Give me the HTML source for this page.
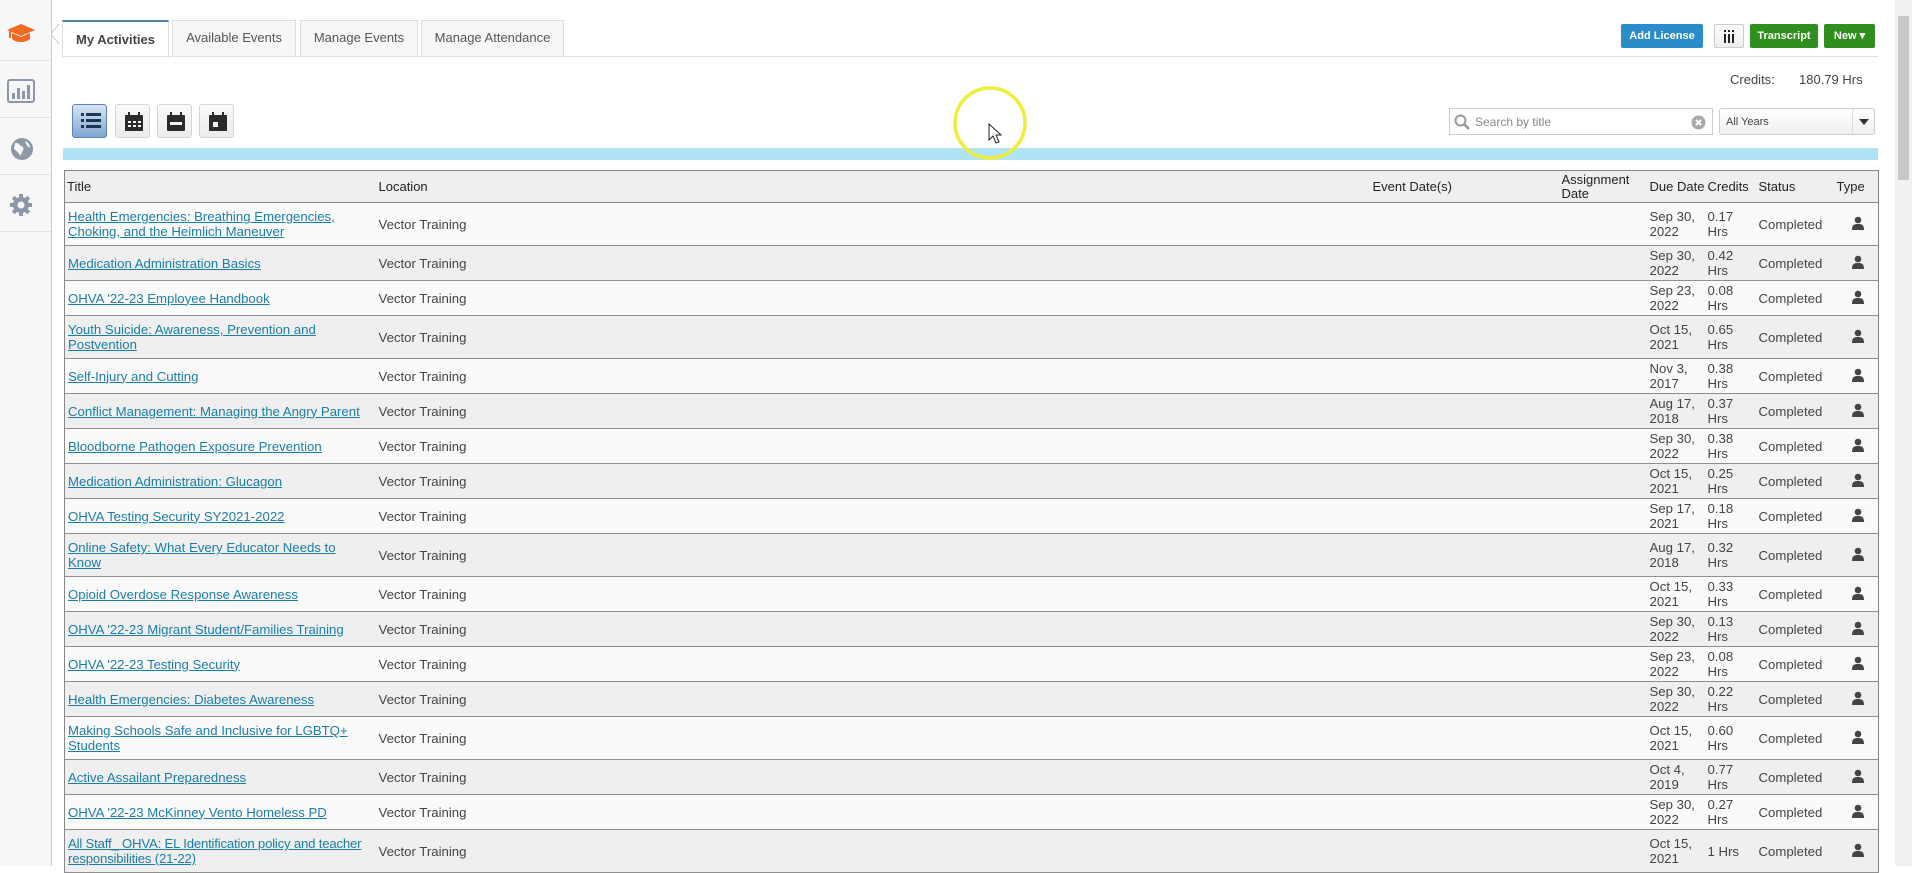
<!DOCTYPE html>
<html><head><meta charset="utf-8"><style>
*{box-sizing:border-box;margin:0;padding:0}
html,body{width:1912px;height:866px;overflow:hidden;background:#fff;font-family:"Liberation Sans",Arial,sans-serif;color:#333}
.sb{position:absolute;left:0;top:0;width:52px;height:866px;background:#f7f7f7;border-right:1px solid #c8c8c8}
.sb .d{position:absolute;left:0;width:51px;height:1px;background:#e2e2e2}
.sb svg{position:absolute}
.tab{position:absolute;top:20px;height:37px;border:1px solid #ddd;border-bottom:none;background:#f7f7f7;font-size:13px;color:#555;text-align:center;line-height:34px}
.tab.a{background:#fff;border-top:2px solid #4d87a6;font-weight:bold;color:#444;height:38px;line-height:36px}
.hl{position:absolute;left:62px;top:56px;width:1816px;height:1px;background:#e2e2e2}
.btn{position:absolute;top:24px;height:24px;border-radius:2px;font-size:11px;font-weight:bold;color:#fff;text-align:center;line-height:24px}
.vb{position:absolute;top:104px;width:35px;height:34px;border:1px solid #d6d6d6;border-radius:3px;background:linear-gradient(#fafafa,#ececec)}
.vb svg{position:absolute;left:8px;top:7px}
.bar{position:absolute;left:63px;top:148px;width:1815px;height:12px;background:#b1e3f7}
table{position:absolute;left:64px;top:170px;width:1814px;border-collapse:collapse;table-layout:fixed;font-size:13.2px;border-left:1px solid #888;border-right:1px solid #888}
th{background:#efefef;height:32px;font-weight:normal;color:#222;text-align:left;padding:0 2px;line-height:14px;border-top:1px solid #888;border-bottom:1px solid #888;font-size:13px;white-space:nowrap}
td{height:35px;padding:0 2px;line-height:15px;border-bottom:1px solid #8f8f8f;color:#444;vertical-align:middle}
td:first-child{padding-left:3px;white-space:nowrap}
tr.t td{height:43px}
tr:nth-child(odd) td{background:#efefef}
tr:nth-child(even) td{background:#fafafa}
td a{color:#1b7ea8;text-decoration:underline}
td.ic{text-align:center;padding-left:6px}
.sc{position:absolute;left:1895px;top:0;width:17px;height:866px;background:#f1f1f1}
.sc .th{position:absolute;left:3px;top:16px;width:11px;height:164px;background:#c8c8c8}
</style></head><body>
<div class="sb">
 <svg style="left:6px;top:22px" width="30" height="22" viewBox="0 0 30 22"><path d="M15 2 L29 8 L15 14 L1 8 Z" fill="#f26a21"/><path d="M6 11 V17 C10 21 20 21 24 17 V11 L15 15 Z" fill="#f26a21"/><path d="M4 9 V16" stroke="#f26a21" stroke-width="2"/></svg>
 <svg style="left:51px;top:24px" width="10" height="20"><path d="M8 0 L0 10 L8 20" fill="#fff" stroke="#c8c8c8"/><rect x="8" y="0" width="3" height="20" fill="#fff"/></svg>
 <div class="d" style="top:60px"></div>
 <svg style="left:7px;top:79px" width="28" height="24" viewBox="0 0 28 24"><rect x="1" y="1" width="26" height="22" rx="2" fill="none" stroke="#8c97a8" stroke-width="2"/><rect x="5" y="14" width="3" height="6" fill="#8c97a8"/><rect x="10" y="9" width="3" height="11" fill="#8c97a8"/><rect x="15" y="12" width="3" height="8" fill="#8c97a8"/><rect x="20" y="6" width="3" height="14" fill="#8c97a8"/></svg>
 <div class="d" style="top:117px"></div>
 <svg style="left:10px;top:137px" width="24" height="24" viewBox="0 0 24 24"><circle cx="12" cy="12" r="11" fill="#8c97a8"/><path d="M5 6 C9 5 10 9 13 10 C15 13 11 15 11 19 C8 16 6 13 4 12 Z M15 4 C18 5 20 8 20 11 C18 10 16 8 15 4Z" fill="#f7f7f7"/></svg>
 <div class="d" style="top:174px"></div>
 <svg style="left:9px;top:193px" width="24" height="24" viewBox="0 0 24 24"><g fill="#8c97a8"><circle cx="12" cy="12" r="8"/><rect x="10" y="1" width="4" height="22"/><rect x="1" y="10" width="22" height="4"/><rect x="10" y="1" width="4" height="22" transform="rotate(45 12 12)"/><rect x="10" y="1" width="4" height="22" transform="rotate(-45 12 12)"/></g><circle cx="12" cy="12" r="3.5" fill="#f7f7f7"/></svg>
 <div class="d" style="top:231px"></div>
</div>

<div class="tab a" style="left:62px;width:107px">My Activities</div>
<div class="tab" style="left:172px;width:124px">Available Events</div>
<div class="tab" style="left:300px;width:118px">Manage Events</div>
<div class="tab" style="left:421px;width:143px">Manage Attendance</div>
<div class="hl"></div>

<div class="btn" style="left:1621px;width:82px;background:#2b8ccb">Add License</div>
<div class="btn" style="left:1714px;width:30px;background:linear-gradient(#fff,#eee);border:1px solid #ccc"><svg style="position:absolute;left:9px;top:5px" width="11" height="13"><g fill="#222"><rect x="0" y="0" width="2" height="2"/><rect x="0" y="4" width="2" height="9"/><rect x="4" y="0" width="2" height="2"/><rect x="4" y="4" width="2" height="9"/><rect x="8" y="0" width="2" height="2"/><rect x="8" y="4" width="2" height="9"/></g></svg></div>
<div class="btn" style="left:1750px;width:68px;background:#2f8f1c">Transcript</div>
<div class="btn" style="left:1824px;width:51px;background:#2f8f1c">New &#9662;</div>

<div style="position:absolute;left:1730px;top:72px;font-size:13px;color:#444">Credits:</div>
<div style="position:absolute;left:1799px;top:72px;font-size:13px;color:#444">180.79 Hrs</div>

<div class="vb" style="left:72px;background:linear-gradient(#d6e4f3,#7fa6cf);border-color:#5f86b0"><svg width="20" height="18"><g fill="#1c3656"><rect x="0" y="1" width="3" height="3"/><rect x="5" y="1" width="15" height="3"/><rect x="0" y="7" width="3" height="3"/><rect x="5" y="7" width="15" height="3"/><rect x="0" y="13" width="3" height="3"/><rect x="5" y="13" width="15" height="3"/></g></svg></div>
<div class="vb" style="left:115px"><svg width="20" height="20"><g fill="#2b2b2b"><rect x="1" y="3" width="18" height="16" rx="1"/><rect x="4" y="0" width="2" height="5"/><rect x="14" y="0" width="2" height="5"/></g><g fill="#f3f3f3"><rect x="4" y="9" width="3" height="2"/><rect x="9" y="9" width="3" height="2"/><rect x="14" y="9" width="3" height="2"/><rect x="4" y="13" width="3" height="2"/><rect x="9" y="13" width="3" height="2"/><rect x="14" y="13" width="3" height="2"/></g></svg></div>
<div class="vb" style="left:157px"><svg width="20" height="20"><g fill="#2b2b2b"><rect x="1" y="3" width="18" height="16" rx="1"/><rect x="4" y="0" width="2" height="5"/><rect x="14" y="0" width="2" height="5"/></g><rect x="4" y="10" width="12" height="3" fill="#f3f3f3"/></svg></div>
<div class="vb" style="left:199px"><svg width="20" height="20"><g fill="#2b2b2b"><rect x="1" y="3" width="18" height="16" rx="1"/><rect x="4" y="0" width="2" height="5"/><rect x="14" y="0" width="2" height="5"/></g><rect x="5" y="10" width="5" height="5" fill="#f3f3f3"/></svg></div>

<div style="position:absolute;left:1449px;top:108px;width:264px;height:27px;border:1px solid #ccc;background:#fff">
 <svg style="position:absolute;left:4px;top:5px" width="16" height="16"><circle cx="6.5" cy="6.5" r="5" fill="none" stroke="#999" stroke-width="2"/><path d="M10 10 L15 15" stroke="#999" stroke-width="2.5"/></svg>
 <span style="position:absolute;left:25px;top:6px;font-size:12px;color:#888">Search by title</span>
 <svg style="position:absolute;right:6px;top:6px" width="15" height="15"><circle cx="7.5" cy="7.5" r="7" fill="#aaa"/><path d="M5 5 L10 10 M10 5 L5 10" stroke="#fff" stroke-width="2"/></svg>
</div>
<div style="position:absolute;left:1719px;top:108px;width:156px;height:27px;border:1px solid #ccc;border-radius:3px;background:linear-gradient(#fff,#f0f0f0)">
 <span style="position:absolute;left:6px;top:7px;font-size:11px;color:#444">All Years</span>
 <div style="position:absolute;right:0;top:0;width:22px;height:25px;border-left:1px solid #ddd"></div>
 <div style="position:absolute;right:5px;top:10px;width:0;height:0;border-left:5px solid transparent;border-right:5px solid transparent;border-top:6px solid #333"></div>
</div>

<div class="bar"></div>

<svg width="0" height="0" style="position:absolute"><defs><symbol id="u" viewBox="0 0 14 14"><circle cx="7" cy="4" r="3.3" fill="#444"/><path d="M1 14 C1 9 3 8 7 8 C11 8 13 9 13 14 Z" fill="#444"/></symbol></defs></svg>

<table>
<colgroup><col style="width:312px"><col style="width:994px"><col style="width:189px"><col style="width:88px"><col style="width:58px"><col style="width:51px"><col style="width:78px"><col style="width:44px"></colgroup>
<tr><th>Title</th><th>Location</th><th>Event Date(s)</th><th>Assignment<br>Date</th><th>Due Date</th><th>Credits</th><th>Status</th><th>Type</th></tr>
<tr class="t"><td><a>Health Emergencies: Breathing Emergencies,<br>Choking, and the Heimlich Maneuver</a></td><td>Vector Training</td><td></td><td></td><td>Sep 30,<br>2022</td><td>0.17<br>Hrs</td><td>Completed</td><td class="ic"><svg width="14" height="14"><use href="#u"/></svg></td></tr>
<tr><td><a>Medication Administration Basics</a></td><td>Vector Training</td><td></td><td></td><td>Sep 30,<br>2022</td><td>0.42<br>Hrs</td><td>Completed</td><td class="ic"><svg width="14" height="14"><use href="#u"/></svg></td></tr>
<tr><td><a>OHVA '22-23 Employee Handbook</a></td><td>Vector Training</td><td></td><td></td><td>Sep 23,<br>2022</td><td>0.08<br>Hrs</td><td>Completed</td><td class="ic"><svg width="14" height="14"><use href="#u"/></svg></td></tr>
<tr class="t"><td><a>Youth Suicide: Awareness, Prevention and<br>Postvention</a></td><td>Vector Training</td><td></td><td></td><td>Oct 15,<br>2021</td><td>0.65<br>Hrs</td><td>Completed</td><td class="ic"><svg width="14" height="14"><use href="#u"/></svg></td></tr>
<tr><td><a>Self-Injury and Cutting</a></td><td>Vector Training</td><td></td><td></td><td>Nov 3,<br>2017</td><td>0.38<br>Hrs</td><td>Completed</td><td class="ic"><svg width="14" height="14"><use href="#u"/></svg></td></tr>
<tr><td><a>Conflict Management: Managing the Angry Parent</a></td><td>Vector Training</td><td></td><td></td><td>Aug 17,<br>2018</td><td>0.37<br>Hrs</td><td>Completed</td><td class="ic"><svg width="14" height="14"><use href="#u"/></svg></td></tr>
<tr><td><a>Bloodborne Pathogen Exposure Prevention</a></td><td>Vector Training</td><td></td><td></td><td>Sep 30,<br>2022</td><td>0.38<br>Hrs</td><td>Completed</td><td class="ic"><svg width="14" height="14"><use href="#u"/></svg></td></tr>
<tr><td><a>Medication Administration: Glucagon</a></td><td>Vector Training</td><td></td><td></td><td>Oct 15,<br>2021</td><td>0.25<br>Hrs</td><td>Completed</td><td class="ic"><svg width="14" height="14"><use href="#u"/></svg></td></tr>
<tr><td><a>OHVA Testing Security SY2021-2022</a></td><td>Vector Training</td><td></td><td></td><td>Sep 17,<br>2021</td><td>0.18<br>Hrs</td><td>Completed</td><td class="ic"><svg width="14" height="14"><use href="#u"/></svg></td></tr>
<tr class="t"><td><a>Online Safety: What Every Educator Needs to<br>Know</a></td><td>Vector Training</td><td></td><td></td><td>Aug 17,<br>2018</td><td>0.32<br>Hrs</td><td>Completed</td><td class="ic"><svg width="14" height="14"><use href="#u"/></svg></td></tr>
<tr><td><a>Opioid Overdose Response Awareness</a></td><td>Vector Training</td><td></td><td></td><td>Oct 15,<br>2021</td><td>0.33<br>Hrs</td><td>Completed</td><td class="ic"><svg width="14" height="14"><use href="#u"/></svg></td></tr>
<tr><td><a>OHVA '22-23 Migrant Student/Families Training</a></td><td>Vector Training</td><td></td><td></td><td>Sep 30,<br>2022</td><td>0.13<br>Hrs</td><td>Completed</td><td class="ic"><svg width="14" height="14"><use href="#u"/></svg></td></tr>
<tr><td><a>OHVA '22-23 Testing Security</a></td><td>Vector Training</td><td></td><td></td><td>Sep 23,<br>2022</td><td>0.08<br>Hrs</td><td>Completed</td><td class="ic"><svg width="14" height="14"><use href="#u"/></svg></td></tr>
<tr><td><a>Health Emergencies: Diabetes Awareness</a></td><td>Vector Training</td><td></td><td></td><td>Sep 30,<br>2022</td><td>0.22<br>Hrs</td><td>Completed</td><td class="ic"><svg width="14" height="14"><use href="#u"/></svg></td></tr>
<tr class="t"><td><a>Making Schools Safe and Inclusive for LGBTQ+<br>Students</a></td><td>Vector Training</td><td></td><td></td><td>Oct 15,<br>2021</td><td>0.60<br>Hrs</td><td>Completed</td><td class="ic"><svg width="14" height="14"><use href="#u"/></svg></td></tr>
<tr><td><a>Active Assailant Preparedness</a></td><td>Vector Training</td><td></td><td></td><td>Oct 4,<br>2019</td><td>0.77<br>Hrs</td><td>Completed</td><td class="ic"><svg width="14" height="14"><use href="#u"/></svg></td></tr>
<tr><td><a>OHVA '22-23 McKinney Vento Homeless PD</a></td><td>Vector Training</td><td></td><td></td><td>Sep 30,<br>2022</td><td>0.27<br>Hrs</td><td>Completed</td><td class="ic"><svg width="14" height="14"><use href="#u"/></svg></td></tr>
<tr class="t"><td><a style="letter-spacing:-0.2px">All Staff_ OHVA: EL Identification policy and teacher<br>responsibilities (21-22)</a></td><td>Vector Training</td><td></td><td></td><td>Oct 15,<br>2021</td><td>1 Hrs</td><td>Completed</td><td class="ic"><svg width="14" height="14"><use href="#u"/></svg></td></tr>
</table>

<svg style="position:absolute;left:950px;top:84px" width="80" height="80"><circle cx="40" cy="39" r="35" fill="none" stroke="#eeee3a" stroke-width="3.5"/><path d="M39 40 L39 56 L43 52 L46 59 L49 58 L46 51 L51 51 Z" fill="#fff" stroke="#222" stroke-width="1"/></svg>

<div class="sc"><div class="th"></div></div>
</body></html>
